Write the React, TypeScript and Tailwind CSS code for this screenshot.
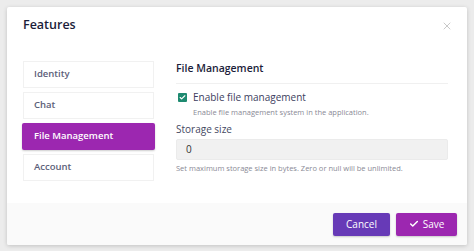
import { Check, X } from "lucide-react";

const tabs = ["Identity", "Chat", "File Management", "Account"];

export default function App() {
  const active = "File Management";

  return (
    <div
      className="h-[251px] w-[474px] bg-[#ececec] p-[7px]"
      style={{ fontFamily: "'Open Sans', 'Noto Sans', sans-serif" }}
    >
      <div className="flex h-[238px] flex-col overflow-hidden rounded-[2px] bg-white shadow-[0_1px_4px_rgba(0,0,0,0.18)]">
        {/* header */}
        <div className="flex h-[36px] items-center justify-between pl-[16px] pr-[14px] pt-[1px]">
          <h2 className="text-[12.5px] font-semibold text-[#1b1d3a]">Features</h2>
          <X className="h-[12px] w-[12px] text-[#b5b5b5]" strokeWidth={1.5} />
        </div>

        {/* body */}
        <div className="flex flex-1 gap-[21px] pl-[15px] pr-[19px] pt-[18px]">
          <div className="flex w-[133px] flex-col gap-[4px]">
            {tabs.map((t) =>
              t === active ? (
                <div
                  key={t}
                  className="flex h-[27px] items-center rounded-[2px] bg-[#9c27b0] px-[12px] text-[9.5px] font-semibold text-white shadow-[0_1px_2px_rgba(0,0,0,0.2)]"
                >
                  {t}
                </div>
              ) : (
                <div
                  key={t}
                  className="mx-[1px] flex h-[27px] items-center border border-[#f1f1f1] px-[10px] text-[9.5px] font-semibold text-[#5c6079]"
                >
                  {t}
                </div>
              )
            )}
          </div>

          <div className="flex-1">
            <div className="border-b border-[#f0f0f0] pb-[6px] text-[10.5px] font-semibold text-[#1b1d3a]">
              File Management
            </div>
            <div className="mt-[6px] flex items-center gap-[6px] pl-[2px]">
              <span className="flex h-[9px] w-[9px] items-center justify-center rounded-[1px] bg-[#1e8a70]">
                <Check className="h-[7px] w-[7px] text-white" strokeWidth={4} />
              </span>
              <span className="text-[10px] text-[#3d4060]">Enable file management</span>
            </div>
            <div className="mt-[2px] pl-[17px] text-[7.5px] text-[#8a8a96]">
              Enable file management system in the application.
            </div>
            <div className="mt-[4px] text-[10px] text-[#454862]">Storage size</div>
            <div className="mt-[2px] flex h-[21px] items-center rounded-[2px] border border-[#ebebeb] bg-[#f1f1f1] px-[9px] text-[10px] text-[#333]">
              0
            </div>
            <div className="mt-[3px] text-[7.5px] text-[#8a8a96]">
              Set maximum storage size in bytes. Zero or null will be unlimited.
            </div>
          </div>
        </div>

        {/* footer */}
        <div className="flex h-[42px] items-center justify-end gap-[6px] bg-[#fafafa] pr-[10px]">
          <button className="flex h-[23px] w-[57px] items-center justify-center rounded-[2px] bg-[#673ab7] text-[10px] text-white shadow-[0_1px_2px_rgba(0,0,0,0.2)]">
            Cancel
          </button>
          <button className="flex h-[23px] w-[61px] items-center justify-center gap-[4px] rounded-[2px] bg-[#9c27b0] text-[10px] text-white shadow-[0_1px_2px_rgba(0,0,0,0.2)]">
            <Check className="h-[10px] w-[10px]" strokeWidth={3.5} />
            Save
          </button>
        </div>
      </div>
    </div>
  );
}
